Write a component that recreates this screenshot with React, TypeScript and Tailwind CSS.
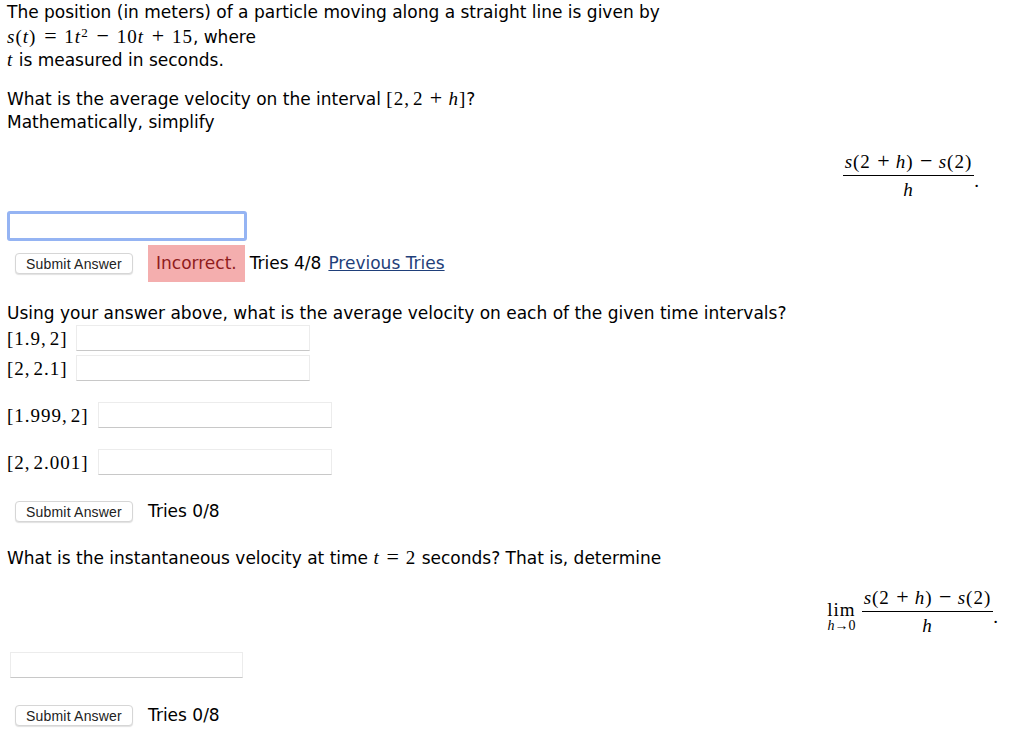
import React from "react";

const sans = "font-['DejaVu_Sans','Verdana',sans-serif]";
const serif = "font-['Liberation_Serif','Times_New_Roman',serif]";

function M({ children }: { children: React.ReactNode }) {
  return <span className={`${serif} text-[19px] leading-none tracking-[1px]`}>{children}</span>;
}

function I({ children }: { children: React.ReactNode }) {
  return <i>{children}</i>;
}

// thin space after a comma, like the math renderer does
function Th() {
  return <span className="inline-block w-[3px]" />;
}

// operator slot, TeX-like spacing
function Op({ c, w = "w-[26px]" }: { c: string; w?: string }) {
  return <span className={`inline-block ${w} text-center text-[22px] leading-none tracking-normal`}>{c}</span>;
}

function Frac() {
  return (
    <span className={`${serif} inline-flex flex-col items-center text-[19px] leading-[22px] tracking-[1px]`}>
      <span className="px-[2px]">
        <I>s</I>(2<Op c="+" w="w-[25px]" />
        <I>h</I>)<Op c="−" w="w-[25px]" />
        <I>s</I>(2)
      </span>
      <span className="mt-[2px] h-px w-full bg-black" />
      <span className="pt-[3px]">
        <I>h</I>
      </span>
    </span>
  );
}

function SubmitRow({ children }: { children?: React.ReactNode }) {
  return (
    <div className="flex items-center">
      <button className="ml-[8px] h-[21px] w-[118px] rounded-[4px] border border-[#d6d6d6] bg-white font-['Liberation_Sans',Arial,sans-serif] text-[14px] leading-none tracking-[0.2px] text-[#222] shadow-[0_1px_1px_rgba(0,0,0,0.12)]">
        Submit Answer
      </button>
      {children}
    </div>
  );
}

function Field({ w = "w-[234px]" }: { w?: string }) {
  return (
    <input
      className={`${w} h-[26px] border border-[#ececec] border-b-[#c8c8c8] bg-white outline-none`}
    />
  );
}

export default function App() {
  return (
    <div className={`${sans} min-h-[731px] bg-white px-[7px] pt-[1px] text-[17px] leading-[23px] text-black`}>
      <p>The position (in meters) of a particle moving along a straight line is given by</p>
      <p className="mt-[1px]">
        <M>
          <I>s</I>(<I>t</I>)<Op c="=" w="w-[28px]" />1<I>t</I>
          <sup className="text-[13px]">2</sup>
          <Op c="−" w="w-[28px]" />10<I>t</I>
          <Op c="+" w="w-[28px]" />15
        </M>
        , where
      </p>
      <p>
        <M>
          <I>t</I>
        </M>{" "}
        is measured in seconds.
      </p>

      <p className="mt-[15px]">
        What is the average velocity on the interval{" "}
        <M>
          [2,<Th />2<Op c="+" w="w-[25px]" />
          <I>h</I>]
        </M>
        ?
      </p>
      <p>Mathematically, simplify</p>

      <div className="mt-[16px] flex justify-end pr-[38px]">
        <Frac />
        <span className={`${serif} self-center pt-[10px] text-[19px]`}>.</span>
      </div>

      <div className="mt-[10px]">
        <input className="h-[30px] w-[240px] rounded-[3px] border-[3px] border-[#95b4f3] bg-white outline-none" />
      </div>

      <div className="mt-[4px] flex items-center">
        <SubmitRow>
          <span className="ml-[15px] inline-block bg-[#f4aeae] px-[8px] py-[7px] leading-[23px] text-[#8f1c1c]">Incorrect.</span>
          <span className="ml-[5px]">Tries 4/8</span>
          <a href="#" className="ml-[7px] text-[#1f3f7a] underline">
            Previous Tries
          </a>
        </SubmitRow>
      </div>

      <p className="mt-[20px]">Using your answer above, what is the average velocity on each of the given time intervals?</p>
      <div className="flex items-center gap-[8px]">
        <M>
          [1.9,<Th />2]
        </M>
        <Field />
      </div>
      <div className="mt-[4px] flex items-center gap-[8px]">
        <M>
          [2,<Th />2.1]
        </M>
        <Field />
      </div>
      <div className="mt-[21px] flex items-center gap-[9px]">
        <M>
          [1.999,<Th />2]
        </M>
        <Field />
      </div>
      <div className="mt-[21px] flex items-center gap-[9px]">
        <M>
          [2,<Th />2.001]
        </M>
        <Field />
      </div>

      <div className="mt-[25px]">
        <SubmitRow>
          <span className="ml-[15px]">Tries 0/8</span>
        </SubmitRow>
      </div>

      <p className="mt-[23px]">
        What is the instantaneous velocity at time{" "}
        <M>
          <I>t</I>
          <Op c="=" />2
        </M>{" "}
        seconds? That is, determine
      </p>

      <div className="mt-[16px] flex justify-end pr-[19px]">
        <span className={`${serif} mr-[6px] inline-flex flex-col items-center self-center pt-[10px] text-[19px] leading-[18px] tracking-[1px]`}>
          <span>lim</span>
          <span className="text-[14px] leading-[14px] tracking-normal">
            <I>h</I>→0
          </span>
        </span>
        <Frac />
        <span className={`${serif} self-center pt-[10px] text-[19px]`}>.</span>
      </div>

      <div className="mt-[15px] pl-[3px]">
        <Field w="w-[233px]" />
      </div>

      <div className="mt-[26px]">
        <SubmitRow>
          <span className="ml-[15px]">Tries 0/8</span>
        </SubmitRow>
      </div>
    </div>
  );
}
